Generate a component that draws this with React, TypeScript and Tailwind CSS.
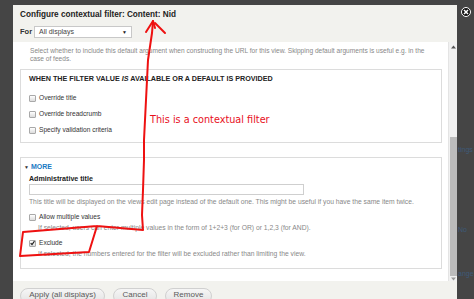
import React from "react";

function Box({ checked = false }: { checked?: boolean }) {
  return (
    <div className="w-[7px] h-[7px] border border-[#a9a9a9] rounded-[1px] bg-gradient-to-b from-[#ffffff] to-[#dcdcdc] flex items-center justify-center shrink-0">
      {checked && (
        <svg width="6" height="6" viewBox="0 0 6 6">
          <path d="M0.8 3.2 L2.4 4.8 L5.4 0.8" stroke="#222" strokeWidth="1.4" fill="none" />
        </svg>
      )}
    </div>
  );
}

function CheckRow({ label, checked = false, h = "h-[16px]" }: { label: string; checked?: boolean; h?: string }) {
  return (
    <div className={`flex items-center gap-[3px] ${h}`}>
      <Box checked={checked} />
      <span className="text-[6.6px] leading-[8px] text-[#333]">{label}</span>
    </div>
  );
}

export default function App() {
  return (
    <div className="w-[474px] h-[299px] overflow-hidden relative bg-[#454545] font-['Liberation_Sans',Arial,sans-serif]">
      <div className="flex pt-[5px] pl-[13px] h-full">
        <div className="w-[444px] h-full flex flex-col shrink-0">
          {/* header */}
          <div className="h-[37px] bg-[#f2f2ee] pl-[7px] pt-[5px] shrink-0">
            <div className="text-[8.2px] leading-[10px] font-bold text-[#222]">
              Configure contextual filter: Content: Nid
            </div>
            <div className="flex items-center mt-[6px] h-[12px]">
              <span className="text-[7.5px] font-bold text-[#333] w-[14px]">For</span>
              <div className="w-[98px] h-[12px] bg-white border border-[#c8c8c8] flex items-center justify-between pl-[4px] pr-[4px]">
                <span className="text-[7px] text-[#444] leading-[8px]">All displays</span>
                <span className="text-[5px] text-[#222] leading-[6px]">▼</span>
              </div>
            </div>
          </div>
          {/* body */}
          <div className="h-[239px] flex shrink-0 bg-white">
            <div className="w-[435px] h-full overflow-hidden pt-[5px]">
              <div className="pl-[17px] text-[6.6px] leading-[7.5px] text-[#888] whitespace-nowrap">
                Select whether to include this default argument when constructing the URL for this view. Skipping default arguments is useful e.g. in the
                <br />
                case of feeds.
              </div>
              <div className="mt-[7px] ml-[7px] w-[422px] border border-[#dcdcdc] pl-[8px] pt-[4px] pb-[4px]">
                <div className="text-[7.2px] leading-[9px] font-bold text-[#222] whitespace-nowrap">
                  WHEN THE FILTER VALUE <i>IS</i> AVAILABLE OR A DEFAULT IS PROVIDED
                </div>
                <div className="mt-[7px]">
                  <CheckRow label="Override title" />
                  <CheckRow label="Override breadcrumb" />
                  <CheckRow label="Specify validation criteria" />
                </div>
              </div>
              <div className="mt-[14px] ml-[7px] w-[422px] border border-[#dcdcdc] pt-[4px] pb-[10px]">
                <div className="flex items-center pl-[3px] h-[9px] gap-[2px]">
                  <span className="text-[5px] leading-[6px] text-[#333]">▼</span>
                  <span className="text-[7px] leading-[9px] font-bold text-[#1a7ac4]">MORE</span>
                </div>
                <div className="pl-[8px]">
                  <div className="mt-[3px] text-[7.1px] leading-[10px] font-bold text-[#222]">Administrative title</div>
                  <div className="w-[275px] h-[11px] border border-[#cfcfcf] bg-white" />
                  <div className="mt-[3px] text-[6.75px] leading-[8px] text-[#888] whitespace-nowrap">
                    This title will be displayed on the views edit page instead of the default one. This might be useful if you have the same item twice.
                  </div>
                  <div className="mt-[5px]">
                    <CheckRow label="Allow multiple values" h="h-[12px]" />
                  </div>
                  <div className="mt-[1px] pl-[9px] text-[6.75px] leading-[8px] text-[#888] whitespace-nowrap">
                    If selected, users can enter multiple values in the form of 1+2+3 (for OR) or 1,2,3 (for AND).
                  </div>
                  <div className="mt-[5px]">
                    <CheckRow label="Exclude" checked h="h-[12px]" />
                  </div>
                  <div className="mt-[1px] pl-[9px] text-[6.75px] leading-[8px] text-[#888] whitespace-nowrap">
                    If selected, the numbers entered for the filter will be excluded rather than limiting the view.
                  </div>
                </div>
              </div>
            </div>
            {/* scrollbar */}
            <div className="w-[9px] h-full bg-[#f1f1f1] border-l border-[#e4e4e4] flex flex-col items-center">
              <div className="h-[10px] flex items-center justify-center">
                <svg width="5" height="4" viewBox="0 0 5 4"><path d="M0 3.5 L2.5 0.5 L5 3.5 Z" fill="#555" /></svg>
              </div>
              <div className="h-[85px]" />
              <div className="w-[7px] h-[139px] bg-[#bcbcbc]" />
              <div className="flex-1 flex items-center justify-center">
                <svg width="5" height="4" viewBox="0 0 5 4"><path d="M0 0.5 L2.5 3.5 L5 0.5 Z" fill="#999" /></svg>
              </div>
            </div>
          </div>
          {/* footer */}
          <div className="flex-1 bg-[#f2f2ee] pl-[7px] pt-[7px] flex gap-[8px] items-start">
            <div className="w-[85px] h-[16px] rounded-full border border-[#d0d0d0] bg-gradient-to-b from-[#f6f6f6] to-[#e2e2e2] flex justify-center pt-[1px]">
              <span className="text-[8px] leading-[10px] text-[#5a5a5a]">Apply (all displays)</span>
            </div>
            <div className="w-[44px] h-[16px] rounded-full border border-[#d0d0d0] bg-gradient-to-b from-[#f6f6f6] to-[#e2e2e2] flex justify-center pt-[1px]">
              <span className="text-[8px] leading-[10px] text-[#5a5a5a]">Cancel</span>
            </div>
            <div className="w-[47px] h-[16px] rounded-full border border-[#d0d0d0] bg-gradient-to-b from-[#f6f6f6] to-[#e2e2e2] flex justify-center pt-[1px]">
              <span className="text-[8px] leading-[10px] text-[#5a5a5a]">Remove</span>
            </div>
          </div>
        </div>
        {/* right strip with content behind overlay */}
        <div className="w-[17px] h-full overflow-hidden pl-[1px] text-[7px] text-[#3e5a78] leading-[8px] whitespace-nowrap">
          <div className="mt-[141px]">tings</div>
          <div className="mt-[72px]">No</div>
          <div className="mt-[36px]">ange</div>
        </div>
      </div>

      {/* close button */}
      <div className="absolute left-[461px] top-[7px] w-[10px] h-[10px] rounded-full bg-[#111] border border-white flex items-center justify-center">
        <svg width="6" height="6" viewBox="0 0 6 6">
          <path d="M1 1 L5 5 M5 1 L1 5" stroke="#fff" strokeWidth="1.5" />
        </svg>
      </div>

      {/* red annotation */}
      <div className="absolute left-[150px] top-[114px] text-[9.7px] leading-[12px] text-[#e8101c] font-['DejaVu_Sans',sans-serif] whitespace-nowrap">
        This is a contextual filter
      </div>
      <svg className="absolute left-0 top-0 pointer-events-none" width="474" height="299" viewBox="0 0 474 299">
        <g stroke="#ee1111" strokeWidth="2" fill="none" strokeLinejoin="round" strokeLinecap="round">
          <polyline points="153,21 152,33 148,60 146,100 144,140 144,160 143,190 142,215 143,230 97,226 23,232 20,256 89,252 97,226" />
          <polyline points="146,32 153,21 155,28" />
          <polyline points="155,23 165,33" />
        </g>
      </svg>
    </div>
  );
}
